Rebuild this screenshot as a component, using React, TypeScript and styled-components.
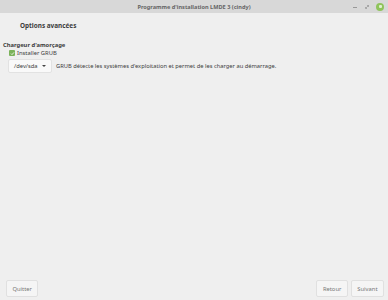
import React from 'react';
import styled, { createGlobalStyle } from 'styled-components';

const GlobalStyle = createGlobalStyle`
  html, body {
    margin: 0;
    padding: 0;
    background: #efefef;
  }
  body {
    font-family: "Noto Sans", "DejaVu Sans", sans-serif;
    color: #3c3c3c;
  }
`;

const Window = styled.div`
  width: 388px;
  height: 300px;
  display: flex;
  flex-direction: column;
  background: #efefef;
  overflow: hidden;
`;

const TitleBar = styled.div`
  height: 13px;
  flex-shrink: 0;
  background: #d8d8d8;
  display: flex;
  align-items: center;
  position: relative;
`;

const Title = styled.div`
  flex: 1;
  text-align: center;
  font-size: 5.6px;
  font-weight: 700;
  color: #666;
`;

const Controls = styled.div`
  position: absolute;
  right: 4px;
  top: 0;
  height: 13px;
  display: flex;
  align-items: center;
  gap: 6px;
`;

const CloseDot = styled.div`
  width: 8px;
  height: 8px;
  border-radius: 50%;
  background: #8fc45c;
  display: flex;
  align-items: center;
  justify-content: center;

  &::after {
    content: '';
    width: 3px;
    height: 3px;
    background: #dff0cf;
    border-radius: 1px;
  }
`;

const Content = styled.div`
  flex: 1;
  display: flex;
  flex-direction: column;
`;

const Header = styled.div`
  padding: 8px 20px 0;
  height: 19px;
  box-sizing: border-box;
  font-size: 6.4px;
  font-weight: 700;
  color: #3c3c3c;
`;

const Section = styled.div`
  padding: 9px 3px 0;
  display: flex;
  flex-direction: column;
`;

const SectionTitle = styled.div`
  font-size: 5.8px;
  font-weight: 700;
  line-height: 8px;
`;

const CheckRow = styled.label`
  display: flex;
  align-items: center;
  gap: 2px;
  padding-left: 6px;
  font-size: 5.8px;
  line-height: 8px;
`;

const Check = styled.span`
  width: 6px;
  height: 6px;
  border-radius: 1px;
  background: #7bb25a;
  display: flex;
  align-items: center;
  justify-content: center;
`;

const BootRow = styled.div`
  display: flex;
  align-items: center;
  gap: 4px;
  padding-left: 5px;
  margin-top: 2px;
  font-size: 5.75px;
`;

const Combo = styled.div`
  width: 44px;
  height: 14px;
  box-sizing: border-box;
  display: flex;
  align-items: center;
  justify-content: space-between;
  padding: 0 5px 0 5px;
  background: #f9f9f9;
  border: 1px solid #e2e2e2;
  border-radius: 2px;
  font-size: 5.8px;
`;

const Caret = styled.span`
  width: 0;
  height: 0;
  border-left: 2px solid transparent;
  border-right: 2px solid transparent;
  border-top: 2px solid #444;
`;

const Footer = styled.div`
  display: flex;
  align-items: center;
  padding: 0 4px 3px 6px;
  gap: 3px;
`;

const Spacer = styled.div`
  flex: 1;
`;

const Button = styled.button`
  height: 17px;
  padding: 0 5.5px;
  box-sizing: border-box;
  background: #f5f5f5;
  border: 1px solid #e0e0e0;
  border-radius: 2px;
  font-family: "Noto Sans", "DejaVu Sans", sans-serif;
  font-size: 5.8px;
  color: #777;
`;

const App: React.FC = () => (
  <>
    <GlobalStyle />
    <Window>
      <TitleBar>
        <Title>Programme d'installation LMDE 3 (cindy)</Title>
        <Controls>
          <svg width="6" height="6" viewBox="0 0 6 6">
            <path d="M1 3.5h4" stroke="#888" strokeWidth="0.8" />
          </svg>
          <svg width="6" height="6" viewBox="0 0 6 6">
            <path d="M2 4L4.5 1.5M3 1.5h1.5V3M1.5 3v1.5H3" stroke="#888" strokeWidth="0.6" fill="none" />
          </svg>
          <CloseDot />
        </Controls>
      </TitleBar>
      <Content>
        <Header>Options avancées</Header>
        <Section>
          <SectionTitle>Chargeur d'amorçage</SectionTitle>
          <CheckRow>
            <Check>
              <svg width="5" height="5" viewBox="0 0 5 5">
                <path d="M1 2.6l1 1 2-2.2" stroke="#fff" strokeWidth="0.8" fill="none" />
              </svg>
            </Check>
            Installer GRUB
          </CheckRow>
          <BootRow>
            <Combo>
              /dev/sda
              <Caret />
            </Combo>
            GRUB détecte les systèmes d'exploitation et permet de les charger au démarrage.
          </BootRow>
        </Section>
      </Content>
      <Footer>
        <Button>Quitter</Button>
        <Spacer />
        <Button>Retour</Button>
        <Button>Suivant</Button>
      </Footer>
    </Window>
  </>
);

export default App;
